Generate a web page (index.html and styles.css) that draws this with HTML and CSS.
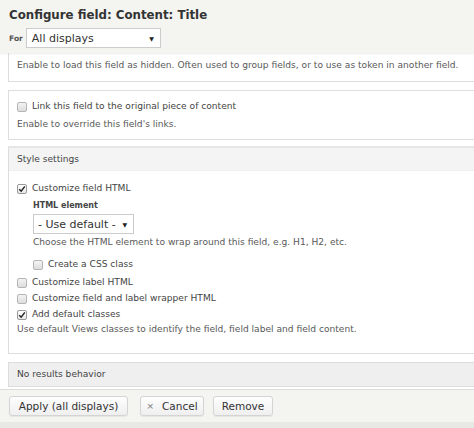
FILE: index.html
```html
<!DOCTYPE html>
<html>
<head>
<meta charset="utf-8">
<link rel="stylesheet" href="styles.css">
</head>
<body>
<div class="dialog">
  <div class="header">
    <h1 class="title">Configure field: Content: Title</h1>
    <div class="for-row">
      <span class="for-label">For</span>
      <span class="select select-wide"><span class="select-text">All displays</span><span class="arrow">▼</span></span>
    </div>
  </div>
  <div class="content">
    <div class="fs fs-cut">
      <div class="desc">Enable to load this field as hidden. Often used to group fields, or to use as token in another field.</div>
    </div>
    <div class="fs fs-link">
      <div class="check-row"><span class="cb"></span><span class="cb-label">Link this field to the original piece of content</span></div>
      <div class="desc">Enable to override this field's links.</div>
    </div>
    <div class="fs fs-style">
      <div class="legend">Style settings</div>
      <div class="fs-body">
        <div class="check-row"><span class="cb checked"><svg viewBox="0 0 10 10" width="8" height="8"><path d="M1.5 5.2 L4 7.8 L8.5 1.8" fill="none" stroke="#222" stroke-width="1.8"/></svg></span><span class="cb-label">Customize field HTML</span></div>
        <div class="indent">
          <div class="field-label">HTML element</div>
          <span class="select select-small"><span class="select-text">- Use default -</span><span class="arrow">▼</span></span>
          <div class="desc desc-choose">Choose the HTML element to wrap around this field, e.g. H1, H2, etc.</div>
          <div class="check-row row-css"><span class="cb"></span><span class="cb-label">Create a CSS class</span></div>
        </div>
        <div class="check-row row-tight"><span class="cb"></span><span class="cb-label">Customize label HTML</span></div>
        <div class="check-row row-tight"><span class="cb"></span><span class="cb-label">Customize field and label wrapper HTML</span></div>
        <div class="check-row row-tight"><span class="cb checked"><svg viewBox="0 0 10 10" width="8" height="8"><path d="M1.5 5.2 L4 7.8 L8.5 1.8" fill="none" stroke="#222" stroke-width="1.8"/></svg></span><span class="cb-label">Add default classes</span></div>
        <div class="desc desc-views">Use default Views classes to identify the field, field label and field content.</div>
      </div>
    </div>
    <div class="fs fs-noresults">
      <div class="legend legend-collapsed">No results behavior</div>
    </div>
  </div>
  <div class="footer">
    <span class="btn btn-apply">Apply (all displays)</span>
    <span class="btn btn-cancel"><span class="x">×</span>Cancel</span>
    <span class="btn btn-remove">Remove</span>
  </div>
  <div class="bottom-strip"></div>
</div>
</body>
</html>
```
FILE: styles.css
```css
html, body {
  margin: 0;
  padding: 0;
  background: #ffffff;
  overflow: hidden;
}
body {
  width: 474px;
  height: 428px;
  font-family: "DejaVu Sans", Verdana, sans-serif;
  font-size: 9.1px;
  color: #444;
}
.dialog {
  width: 474px;
  height: 428px;
  display: flex;
  flex-direction: column;
  overflow: hidden;
}
.header {
  background: #f4f4f0;
  height: 53px;
  box-sizing: border-box;
  padding: 6px 9px 0;
  box-shadow: 0 1px 2px rgba(0,0,0,0.08);
  position: relative;
  z-index: 2;
  flex: none;
}
.title {
  margin: 0;
  font-size: 11.8px;
  line-height: 18px;
  font-weight: bold;
  color: #333;
}
.for-row {
  display: flex;
  align-items: center;
  margin-top: 4px;
  gap: 3px;
}
.for-label {
  font-size: 7.6px;
  font-weight: bold;
  color: #555;
}
.select {
  display: inline-flex;
  align-items: center;
  justify-content: space-between;
  background: #fff;
  border: 1px solid #ccc;
  box-sizing: border-box;
  height: 20px;
  padding: 0 6px 0 5px;
  font-size: 11px;
  color: #333;
}
.select-wide {
  width: 135px;
}
.select-small {
  width: 101px;
  font-size: 11px;
  padding-left: 4px;
}
.arrow {
  font-size: 6px;
  color: #222;
}
.content {
  flex: 1;
  display: flex;
  flex-direction: column;
  padding-left: 8px;
}
.fs {
  width: 480px;
  box-sizing: border-box;
  border: 1px solid #ddd;
  background: #fff;
}
.fs-cut {
  border-top: none;
  height: 29px;
  padding: 7px 8px 0;
}
.fs-link {
  margin-top: 8px;
  height: 50px;
  padding: 10px 8px 0;
}
.fs-link .desc {
  margin-top: 7px;
}
.desc {
  color: #595959;
  line-height: 11px;
  white-space: nowrap;
}
.check-row {
  display: flex;
  align-items: center;
  gap: 5px;
  line-height: 11px;
  color: #444;
}
.cb {
  width: 10px;
  height: 10px;
  box-sizing: border-box;
  border: 1px solid #b5b5b5;
  border-radius: 2px;
  background: linear-gradient(#f4f4f4, #dcdcdc);
  display: inline-flex;
  align-items: center;
  justify-content: center;
  flex: none;
}
.cb.checked {
  background: linear-gradient(#ffffff, #e8e8e8);
  border-color: #999;
}
.fs-style {
  margin-top: 6px;
  height: 208px;
  border-top: 2px solid #e6e6e6;
}
.legend {
  background: #f4f4f4;
  height: 22px;
  line-height: 22px;
  padding-left: 8px;
  color: #444;
  border-bottom: 1px solid #f0f0f0;
}
.fs-body {
  padding: 12px 8px 0;
}
.indent {
  padding-left: 16px;
}
.field-label {
  margin-top: 7px;
  font-size: 8px;
  font-weight: bold;
  color: #444;
  line-height: 10px;
}
.select-small {
  margin-top: 3px;
}
.desc-choose {
  margin-top: 3px;
}
.row-css {
  margin-top: 11px;
}
.row-tight {
  margin-top: 5px;
}
.indent + .row-tight {
  margin-top: 7px;
}
.desc-views {
  margin-top: 4px;
}
.fs-noresults {
  margin-top: 8px;
  height: 25px;
}
.legend-collapsed {
  background: #efefef;
  height: 23px;
  line-height: 23px;
  border-bottom: none;
}
.footer {
  flex: none;
  height: 33px;
  box-sizing: border-box;
  background: #f4f4f0;
  border-top: 1px solid #dcdcd8;
  display: flex;
  align-items: center;
  padding: 0 9px;
  margin-top: 2px;
}
.btn {
  display: inline-flex;
  align-items: center;
  justify-content: center;
  height: 20px;
  box-sizing: border-box;
  border: 1px solid #d4d4d4;
  border-radius: 3px;
  background: linear-gradient(#fefefe, #efefef);
  font-size: 10.5px;
  color: #333;
  box-shadow: 0 1px 1px rgba(0,0,0,0.06);
}
.btn-apply {
  width: 119px;
}
.btn-cancel {
  width: 64px;
  margin-left: 12px;
}
.btn-remove {
  width: 60px;
  margin-left: 9px;
}
.btn-cancel .x {
  font-size: 9px;
  color: #777;
  margin-right: 8px;
}
.bottom-strip {
  flex: none;
  height: 7px;
  background: #e8e8e4;
}
```
